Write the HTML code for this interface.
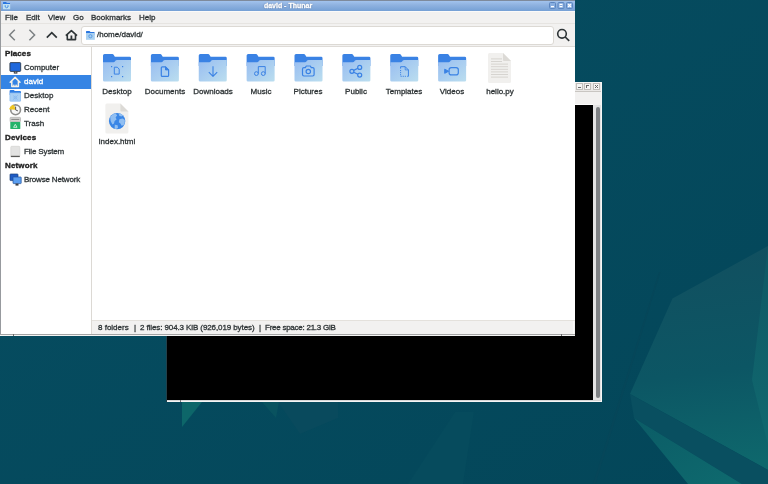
<!DOCTYPE html>
<html><head><meta charset="utf-8">
<style>
*{margin:0;padding:0;box-sizing:border-box}
html,body{width:768px;height:484px;overflow:hidden;background:#06475c;font-family:"Liberation Sans",sans-serif;font-size:8px;color:#2e3436}
.a{position:absolute}
.t{position:absolute;white-space:pre;font-size:8px;line-height:10px;color:#2e3436;-webkit-text-stroke:0.3px #2e3436;will-change:transform}
.b{font-weight:bold;-webkit-text-stroke:0.35px #222;color:#222}
.c{text-align:center;width:80px}
</style></head><body>
<svg class="a" style="left:0;top:0" width="768" height="484" viewBox="0 0 768 484">
  <defs><linearGradient id="bgg" x1="0" y1="0" x2="1" y2="1"><stop offset="0" stop-color="#074e62"/><stop offset="1" stop-color="#034659"/></linearGradient></defs>
  <rect width="768" height="484" fill="url(#bgg)"/>
  <defs>
  <linearGradient id="r1" gradientUnits="userSpaceOnUse" x1="740" y1="250" x2="768" y2="460"><stop offset="0" stop-color="#115060"/><stop offset="0.55" stop-color="#0c5664"/><stop offset="1" stop-color="#0e676c"/></linearGradient>
  <linearGradient id="fs" x1="0" y1="0" x2="0" y2="1"><stop offset="0" stop-color="#0f5764"/><stop offset="1" stop-color="#10696f"/></linearGradient>
  <linearGradient id="fb" x1="0" y1="0" x2="1" y2="1"><stop offset="0" stop-color="#0b5c66"/><stop offset="1" stop-color="#0f6d70"/></linearGradient>
  </defs>
  <polygon points="672.5,298.5 768,246 768,470 630,394" fill="url(#r1)"/>
  <polygon points="768,246 752,380 768,445" fill="url(#fs)"/>
  <polygon points="630,394 768,470 768,500 634,418" fill="#094f60"/>
  <polygon points="634,418 768,500 768,484 688,484" fill="url(#fb)"/>
  <polygon points="659,272 660.5,272 595.5,484 593,484" fill="#064659"/>
  <polygon points="182,402 202,402 182,427" fill="#0d6669"/>
  <polygon points="278,402 338,402 338,418 300,434" fill="#094a5d"/>
  <polygon points="262,402 279,402 276,418" fill="#09525f"/>
  <polygon points="455,412 474,412 463,484 408,484" fill="#064b5d"/>
</svg>

<!-- terminal window -->
<div class="a" style="left:166px;top:82px;width:436px;height:320px;background:#f2f1f0"></div>
<div class="a" style="left:166px;top:82px;width:1px;height:320px;background:#22404a"></div>
<div class="a" style="left:167px;top:82px;width:434px;height:1px;background:#f7f7f6"></div>
<div class="a" style="left:167px;top:83px;width:434px;height:8px;background:#ebe9e7"></div>
<div class="a" style="left:167px;top:91px;width:434px;height:1px;background:#c9c6c2"></div>
<div class="a" style="left:167px;top:105px;width:426px;height:295px;background:#000"></div>
<div class="a" style="left:593px;top:105px;width:8px;height:295px;background:#e3e3e3"></div>
<div class="a" style="left:601px;top:83px;width:1px;height:319px;background:#f6f6f6"></div>
<div class="a" style="left:596px;top:107px;width:4px;height:291px;background:#7e8184;border-radius:2px"></div>
<div class="a" style="left:167px;top:104px;width:426px;height:1px;background:#fdfdfd"></div>
<div class="a" style="left:167px;top:400px;width:434px;height:1px;background:#d6d6d6"></div>
<div class="a" style="left:167px;top:401px;width:434px;height:1px;background:#f5f5f5"></div>
<div class="a" style="left:180px;top:400px;width:1px;height:2px;background:#777"></div>
<svg class="a" style="left:575px;top:82px" width="28" height="10" viewBox="575 82 28 10" shape-rendering="crispEdges">
 <g fill="#f6f5f4" stroke="#c2bfbb" stroke-width="1">
  <rect x="576.5" y="83.5" width="6" height="6"/>
  <rect x="584.5" y="83.5" width="6" height="6"/>
  <rect x="593.5" y="83.5" width="6" height="6"/>
 </g>
 <rect x="578" y="87" width="3" height="1" fill="#6a6a6a"/>
 <path d="M586.5,88 V85.5 H589" fill="none" stroke="#6a6a6a" stroke-width="1"/>
 <rect x="586" y="85" width="3" height="1" fill="#6a6a6a"/>
</svg>
<svg class="a" style="left:592px;top:82px" width="10" height="10" viewBox="592 82 10 10">
 <path d="M595,85 L598,88 M598,85 L595,88" stroke="#6a6a6a" stroke-width="1"/>
</svg>

<!-- thunar window -->
<div class="a" style="left:0;top:0;width:575px;height:336px;background:#f2f1f0"></div>
<div class="a" style="left:0;top:0;width:1px;height:334px;background:#979a9e"></div>
<div class="a" style="left:0;top:334px;width:575px;height:1px;background:#a4a4a4"></div>
<div class="a" style="left:0;top:335px;width:575px;height:1px;background:#f4f4f3"></div>
<div class="a" style="left:13px;top:333px;width:1px;height:3px;background:#6a6a6a"></div>
<div class="a" style="left:561px;top:333px;width:1px;height:3px;background:#6a6a6a"></div>
<div class="a" style="left:0;top:0;width:575px;height:1px;background:#7e8a9c"></div>
<div class="a" style="left:1px;top:1px;width:574px;height:10px;background:linear-gradient(#a2c3ee,#8fb2e0 40%,#75a0d5)"></div>
<div class="a" style="left:1px;top:11px;width:574px;height:1px;background:#fbfaf9"></div>
<div class="t b" style="left:248px;top:0.5px;width:80px;text-align:center;color:#fff;font-size:7px;-webkit-text-stroke:0.3px #fff;text-shadow:0 0 1.5px rgba(40,60,100,0.9)">david - Thunar</div>

<!-- menu -->
<div class="t" style="left:5px;top:13px">File</div>
<div class="t" style="left:26px;top:13px">Edit</div>
<div class="t" style="left:48px;top:13px">View</div>
<div class="t" style="left:73px;top:13px">Go</div>
<div class="t" style="left:91px;top:13px">Bookmarks</div>
<div class="t" style="left:139px;top:13px">Help</div>
<div class="a" style="left:1px;top:23px;width:574px;height:1px;background:#e6e4e1"></div>

<!-- toolbar -->
<div class="a" style="left:81px;top:26px;width:473px;height:19px;background:#fff;border:1px solid #dcd9d4;border-radius:3px"></div>
<div class="t" style="left:97px;top:30px">/home/david/</div>
<div class="a" style="left:1px;top:46px;width:574px;height:1px;background:#dedbd7"></div>

<!-- sidebar & content -->
<div class="a" style="left:1px;top:47px;width:90px;height:287px;background:#fff"></div>
<div class="a" style="left:91px;top:47px;width:1px;height:287px;background:#dcd9d4"></div>
<div class="a" style="left:92px;top:47px;width:483px;height:273px;background:#fff"></div>
<div class="a" style="left:92px;top:320px;width:483px;height:1px;background:#e4e1dc"></div>
<div class="a" style="left:92px;top:321px;width:483px;height:13px;background:#f2f1f0"></div>
<div class="a" style="left:573px;top:321px;width:1px;height:13px;background:#fafaf9"></div>

<div class="a" style="left:1px;top:75px;width:90px;height:14px;background:#3584e4"></div>
<div class="t b" style="left:5px;top:49px;letter-spacing:0.1px">Places</div>
<div class="t" style="left:24px;top:63px">Computer</div>
<div class="t" style="left:24px;top:77px;color:#fff;-webkit-text-stroke:0.3px #fff">david</div>
<div class="t" style="left:24px;top:91px">Desktop</div>
<div class="t" style="left:24px;top:105px">Recent</div>
<div class="t" style="left:24px;top:119px">Trash</div>
<div class="t b" style="left:5px;top:133px;letter-spacing:0.15px">Devices</div>
<div class="t" style="left:24px;top:147px;letter-spacing:-0.15px">File System</div>
<div class="t b" style="left:5px;top:161px;letter-spacing:0.15px">Network</div>
<div class="t" style="left:24px;top:175px;letter-spacing:-0.15px">Browse Network</div>

<!-- labels -->
<div class="t c" style="left:77px;top:87px">Desktop</div>
<div class="t c" style="left:125px;top:87px">Documents</div>
<div class="t c" style="left:173px;top:87px">Downloads</div>
<div class="t c" style="left:221px;top:87px">Music</div>
<div class="t c" style="left:268px;top:87px">Pictures</div>
<div class="t c" style="left:316px;top:87px">Public</div>
<div class="t c" style="left:364px;top:87px">Templates</div>
<div class="t c" style="left:412px;top:87px">Videos</div>
<div class="t c" style="left:460px;top:87px">hello.py</div>
<div class="t c" style="left:77px;top:137px">index.html</div>

<div class="t" style="left:98px;top:323px">8 folders</div><div class="t" style="left:133.5px;top:323px">|</div><div class="t" style="left:140px;top:323px;letter-spacing:-0.1px">2 files: 904.3 KiB (926,019 bytes)</div><div class="t" style="left:258.5px;top:323px">|</div><div class="t" style="left:265px;top:323px;letter-spacing:-0.25px">Free space: 21.3 GiB</div>
<svg class="a" style="left:0;top:0" width="768" height="484" viewBox="0 0 768 484">
<defs>
 <linearGradient id="fg" x1="0" y1="0" x2="1" y2="1">
  <stop offset="0" stop-color="#98bdf1"/><stop offset="1" stop-color="#bbdeef"/>
 </linearGradient>
 <g id="folder">
  <path d="M1.6,0 H9.4 Q10.2,0 10.8,0.9 L11.7,2.4 Q11.9,2.7 12.4,2.7 H26.6 Q28,2.7 28,4.1 V12 H0 V1.6 Q0,0 1.6,0Z" fill="#3a82e4"/>
  <path d="M0,8.3 H10.6 Q11.4,8.3 11.9,7.6 L12.6,6.6 Q13.1,5.9 13.9,5.9 H28 V26.2 Q28,27.6 26.6,27.6 H1.4 Q0,27.6 0,26.2Z" fill="url(#fg)"/>
 </g>
 <g id="doc">
  <path d="M1.5,0 H15 L23,8 V28.5 Q23,30 21.5,30 H1.5 Q0,30 0,28.5 V1.5 Q0,0 1.5,0Z" fill="#f1f0ee"/>
  <path d="M15,0 L23,8 H16 Q15,8 15,7Z" fill="#dcdad6"/>
 </g>
</defs>
<!-- window title icon -->
<g transform="translate(3,2)">
 <path d="M0.5,0 H3 L4,1 H7 V3 H0 V0.5Z" fill="#2a76e0"/>
 <rect x="0" y="2" width="7.2" height="5.2" fill="#bfe0f2"/>
 <path d="M2.2,3.2 V5 Q3.6,6.5 5,5 V3.2" fill="none" stroke="#4a90e2" stroke-width="1"/>
</g>
<!-- title buttons -->
<g stroke="#5c86c0" stroke-width="1" fill="#88aee0">
 <rect x="549.5" y="2.5" width="6" height="6" rx="1"/>
 <rect x="558" y="2.5" width="6" height="6" rx="1"/>
 <rect x="566.5" y="2.5" width="6" height="6" rx="1"/>
</g>
<rect x="551" y="6" width="3" height="1.3" fill="#fff"/>
<rect x="559.5" y="3.8" width="3" height="3.4" fill="#fff"/>
<rect x="559.5" y="5" width="3" height="1" fill="#88aee0"/>
<path d="M568,4 L571,7 M571,4 L568,7" stroke="#fff" stroke-width="1.2"/>

<!-- toolbar icons -->
<path d="M14.8,29.8 L9.6,35 L14.8,40.2 M29.4,29.8 L34.6,35 L29.4,40.2" fill="none" stroke="#7c8083" stroke-width="1.5"/>
<path d="M46.8,37.6 L51.8,32.6 L56.8,37.6" fill="none" stroke="#2e3436" stroke-width="1.7"/>
<path d="M65.8,35.6 L71.4,30.6 L77,35.6 M67.3,34.6 V39.6 H75.5 V34.6" fill="none" stroke="#2e3436" stroke-width="1.6" stroke-linejoin="round"/>
<rect x="70.5" y="35.5" width="1.8" height="4.5" fill="#2e3436"/>
<!-- location folder icon -->
<g transform="translate(86,31)">
 <path d="M0.5,0 H3.5 L4.5,1 H8.5 V4 H0 V0.5Z" fill="#2a76e0"/>
 <rect x="0" y="2" width="8.8" height="6.8" fill="#a9d0f0"/>
 <circle cx="4.4" cy="5.2" r="1.6" fill="none" stroke="#4a90e2" stroke-width="0.8"/>
</g>
<!-- search -->
<circle cx="562" cy="33.8" r="4.3" fill="none" stroke="#2e3436" stroke-width="1.6"/>
<path d="M565.2,37 L569.2,40.8" stroke="#2e3436" stroke-width="1.7"/>

<!-- sidebar icons -->
<rect x="9.9" y="62.6" width="10.8" height="8.8" rx="0.8" fill="#1f68dc" stroke="#26303a" stroke-width="0.8"/>
<rect x="13.8" y="71.4" width="3.6" height="2.2" fill="#3c4046"/>
<rect x="14.8" y="71.8" width="1.6" height="1" fill="#9a9a9a"/>
<path d="M10.2,82.2 L15.1,77.4 L20,82.2 M11.8,81.2 V86.6 H18.4 V81.2" fill="none" stroke="#f6f1e6" stroke-width="1.5" stroke-linejoin="round" stroke-linecap="round"/>
<path d="M13.6,86.6 V84.6 M15.1,86.6 V84.6 M16.6,86.6 V84.6" fill="none" stroke="#f6f1e6" stroke-width="0.9"/>
<g transform="translate(9.6,90)">
 <path d="M1,0 H4.2 L5.2,1 H10.4 Q11.4,1 11.4,2 V5 H0 V1 Q0,0 1,0Z" fill="#2f7de3"/>
 <rect x="0" y="2.8" width="11.4" height="8.8" rx="0.8" fill="#a9cff3"/>
 <rect x="0.5" y="3.3" width="10.4" height="7.8" rx="0.5" fill="none" stroke="#8fbdf0" stroke-width="0.6"/>
 <path d="M3.2,5.2 L8.2,10 M8.2,5.2 L3.2,10" stroke="#86b8ee" stroke-width="0.7"/>
 <circle cx="5.7" cy="7.6" r="1.4" fill="none" stroke="#86b8ee" stroke-width="0.7"/>
</g>
<circle cx="15.6" cy="109.8" r="4.9" fill="#f7f7f7" stroke="#8e8e8c" stroke-width="1.6"/>
<path d="M15.6,106.6 V109.9 L17.9,110.9" fill="none" stroke="#444" stroke-width="0.9"/>
<path d="M9,109.2 Q10,106 12.8,104.8 L14.6,106 L15.2,109.8 Z" fill="#efc623"/>
<rect x="10.1" y="117.3" width="10.4" height="4.6" rx="0.8" fill="#d2d2d0" stroke="#a5a5a3" stroke-width="0.6"/>
<rect x="11.3" y="118.9" width="8" height="1.1" fill="#8c8c8a"/>
<rect x="10.3" y="121.9" width="10" height="7.1" rx="0.6" fill="#23b36a"/>
<path d="M13.6,127.3 L15.3,124.3 L17,127.3 Z" fill="none" stroke="#e8f8ee" stroke-width="0.8"/>
<rect x="10.8" y="146.3" width="9" height="10" rx="0.8" fill="#e3e3e2" stroke="#cfcfcd" stroke-width="0.6"/>
<rect x="10.8" y="155.8" width="9" height="1.3" fill="#5a5a58"/>
<rect x="10" y="174" width="8" height="6.6" rx="0.6" fill="#1e5bc6" stroke="#1a3f7a" stroke-width="0.7"/>
<rect x="13" y="177" width="8.2" height="6.6" rx="0.6" fill="#5b9ef0" stroke="#1f4f99" stroke-width="0.7"/>
<rect x="15.5" y="183.6" width="3" height="2" fill="#3d4147"/>

<!-- folders -->
<use href="#folder" x="103" y="54"/>
<use href="#folder" x="150.875" y="54"/>
<use href="#folder" x="198.75" y="54"/>
<use href="#folder" x="246.625" y="54"/>
<use href="#folder" x="294.5" y="54"/>
<use href="#folder" x="342.375" y="54"/>
<use href="#folder" x="390.25" y="54"/>
<use href="#folder" x="438.125" y="54"/>
<g fill="none" stroke="#3a82e4" stroke-width="1" stroke-linejoin="round">
 <!-- desktop -->
 <path d="M114.3,67.2 H117.3 L119.2,69.1 V74.1 H114.3 Z"/>
 <!-- documents -->
 <path d="M161.3,67.8 Q161.3,66.8 162.3,66.8 H165.5 L168.6,69.9 V75.4 Q168.6,76.4 167.6,76.4 H162.3 Q161.3,76.4 161.3,75.4 Z" stroke-width="1.2"/>
 <path d="M165.5,66.8 V69.9 H168.6 Z" fill="#3a82e4"/>
 <!-- downloads -->
 <path d="M213,66.2 V76.3 M208.8,72.2 L213,76.4 L217.2,72.2" stroke-width="1.1"/>
 <!-- music -->
 <circle cx="256.4" cy="73.6" r="1.9"/>
 <circle cx="263.3" cy="73.6" r="1.9"/>
 <path d="M258.3,73.6 V66.6 H265.2 V73.6"/>
 <!-- pictures -->
 <path d="M302.5,69 Q302.5,67.6 303.9,67.6 H305.3 L306.3,66 H310.3 L311.3,67.6 H312.7 Q314.1,67.6 314.1,69 V74.6 Q314.1,76 312.7,76 H303.9 Q302.5,76 302.5,74.6 Z" stroke-width="1.2"/>
 <circle cx="308.3" cy="71.5" r="2.2" stroke-width="1.2"/>
 <!-- public -->
 <g stroke-width="1.2">
 <circle cx="351.9" cy="71.3" r="2"/>
 <circle cx="359.7" cy="67.4" r="2"/>
 <circle cx="359.7" cy="75.1" r="2"/>
 <path d="M353.7,70.4 L357.9,68.3 M353.7,72.2 L357.9,74.2"/>
 </g>
 <!-- templates -->
 <path d="M400.6,68.6 V66.7 H405.2 L408.4,69.9 V76.3 H407.2"/>
 <path d="M405.2,66.7 V69.9 H408.4" stroke-width="0.8"/>
 <path d="M400.6,70 V76.3 H406.5" stroke-dasharray="1.1 1"/>
 <!-- videos -->
 <rect x="449.1" y="67.6" width="9.2" height="7.3" rx="2.2" stroke-width="1.2"/>
 <path d="M444.7,69.2 L448.6,71.25 L444.7,73.3 Z" fill="#3a82e4"/>
</g>
<g fill="#3a82e4">
 <rect x="111" y="66" width="1.2" height="1.2"/><rect x="122" y="66" width="1.2" height="1.2"/>
 <rect x="111" y="76" width="1.2" height="1.2"/><rect x="122" y="76" width="1.2" height="1.2"/>
</g>

<!-- hello.py -->
<use href="#doc" x="488" y="53"/>
<g fill="#d6d4d0">
 <rect x="491" y="58.4" width="11" height="1"/>
 <rect x="491" y="61" width="11" height="1"/>
 <rect x="491" y="63.6" width="17" height="1"/>
 <rect x="491" y="66.2" width="17" height="1"/>
 <rect x="491" y="68.8" width="17" height="1"/>
 <rect x="491" y="71.4" width="17" height="1"/>
 <rect x="491" y="74" width="17" height="1"/>
 <rect x="491" y="76.6" width="17" height="1"/>
</g>
<!-- index.html -->
<use href="#doc" x="105.4" y="103.6"/>
<circle cx="117.1" cy="121.1" r="8.2" fill="#3a86e6"/>
<path d="M110.2,117 Q112,114 115.5,113.6 L117.2,115.3 L115.6,117.4 L116.6,119.4 L114.6,121 L114,123.6 L112.4,124.4 Q110,121.5 110.2,117Z M118.6,113.3 Q121.5,113.6 123.2,115.6 L121.3,116.6 L119.2,115.8Z M119.4,119.2 L122.6,118.4 L124.8,120 Q125.2,123 123.8,125 L121.6,125.8 L120.4,123.4 L118.8,122.2Z M114.8,124.8 L117.6,125.2 L118,128 Q116.4,129.2 114.6,129Z" fill="#91bff2"/>
</svg>

</body></html>
